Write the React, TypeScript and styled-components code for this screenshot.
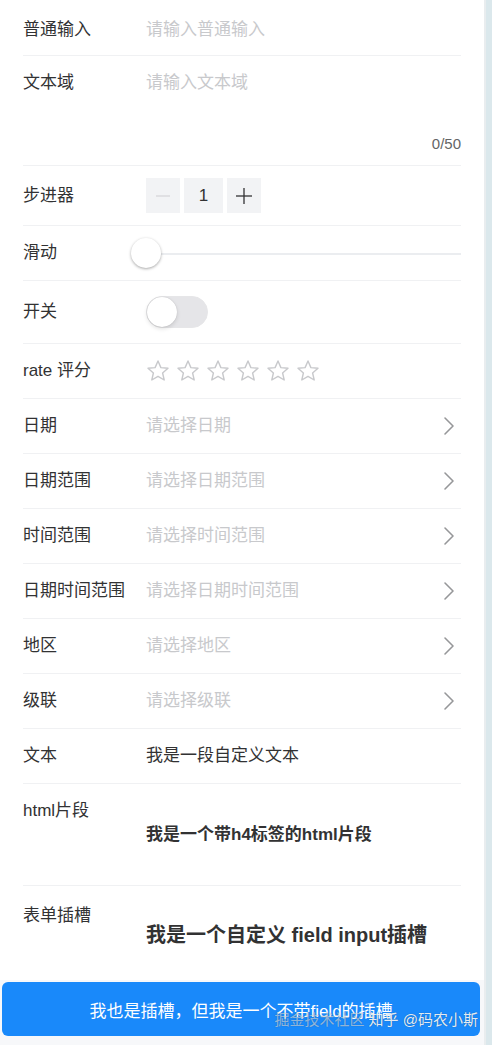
import styled, { createGlobalStyle } from 'styled-components';

const GlobalStyle = createGlobalStyle`
  html, body {
    margin: 0;
    padding: 0;
    background: #dbe8ec;
  }
  body {
    font-family: "Liberation Sans", "Noto Sans CJK SC", sans-serif;
    color: #323233;
  }
`;

const Page = styled.div`
  position: relative;
  width: 484px;
  min-height: 1045px;
  background: #f7f8fa;
  border-right: 2px solid #e9edef;
`;

const Form = styled.div`
  background: #fff;
  padding-top: 1px;
`;

const Cell = styled.div`
  padding: 0 23px;
`;

const CellInner = styled.div<{ $pad?: string; $top?: boolean; $noBorder?: boolean }>`
  display: flex;
  align-items: ${p => (p.$top ? 'flex-start' : 'center')};
  padding: ${p => p.$pad ?? '15px 0'};
  border-bottom: ${p => (p.$noBorder ? 'none' : '1px solid #f0f1f3')};
  font-size: 17px;
  line-height: 24px;
`;

const Label = styled.div`
  flex: 0 0 123px;
  color: #323233;
  white-space: nowrap;
`;

const Value = styled.div`
  flex: 1;
  min-width: 0;
  display: flex;
  align-items: center;
`;

const Placeholder = styled.span`
  flex: 1;
  color: #c8c9cc;
`;

const Text = styled.span`
  color: #323233;
`;

const TextareaBox = styled.div`
  flex: 1;
  display: flex;
  flex-direction: column;
`;

const TextareaArea = styled.div`
  height: 60px;
  color: #c8c9cc;
`;

const WordLimit = styled.div`
  margin-top: 2px;
  margin-bottom: -5px;
  text-align: right;
  font-size: 15px;
  line-height: 22px;
  color: #646566;
`;

const Stepper = styled.div`
  display: flex;
  gap: 4px;
`;

const StepBtn = styled.div<{ $disabled?: boolean }>`
  width: 34px;
  height: 35px;
  background: #f2f3f5;
  display: flex;
  align-items: center;
  justify-content: center;
  color: ${p => (p.$disabled ? '#d5d6d9' : '#323233')};
`;

const StepInput = styled.div`
  width: 39px;
  height: 35px;
  background: #f2f3f5;
  display: flex;
  align-items: center;
  justify-content: center;
  font-size: 17px;
  color: #323233;
`;

const SliderTrack = styled.div`
  position: relative;
  flex: 1;
  height: 2px;
  background: #ebedf0;
  margin-top: 2px;
`;

const SliderHandle = styled.div`
  position: absolute;
  left: -15px;
  top: -15px;
  width: 30px;
  height: 30px;
  border-radius: 50%;
  background: #fff;
  box-shadow: 0 1px 3px rgba(0, 0, 0, 0.35);
`;

const Switch = styled.div`
  position: relative;
  width: 60px;
  height: 30px;
  border: 1px solid #e6e6e8;
  border-radius: 16px;
  background: #e5e5e8;
`;

const SwitchKnob = styled.div`
  position: absolute;
  left: 0;
  top: 0;
  width: 30px;
  height: 30px;
  border-radius: 50%;
  background: #fff;
  box-shadow: 0 2px 4px rgba(0, 0, 0, 0.12), 0 0 1px rgba(0, 0, 0, 0.2);
`;

const Rate = styled.div`
  display: flex;
  gap: 6px;
`;

const ChevronBox = styled.span`
  display: flex;
  margin-right: 6px;
`;

const H4 = styled.h4`
  margin: 24px 0;
  font-size: 17px;
  line-height: 23px;
  font-weight: 700;
  color: #323233;
`;

const SlotText = styled.div`
  margin: 17px 0 13px;
  font-size: 20px;
  line-height: 28px;
  font-weight: 700;
  color: #323233;
`;

const FullButton = styled.div`
  margin: 2px 4px 0 2px;
  height: 54px;
  border-radius: 6px;
  background: #1989fa;
  color: #fff;
  font-size: 17px;
  display: flex;
  align-items: center;
  justify-content: center;
`;

const Watermark = styled.div`
  position: absolute;
  right: 6px;
  top: 1009px;
  display: flex;
  gap: 4px;
  font-size: 15px;
  line-height: 22px;
  white-space: nowrap;
`;

const MarkDim = styled.span`
  color: rgba(255, 255, 255, 0.55);
  text-shadow: 0 0 1px rgba(0, 0, 0, 0.35);
`;

const MarkBright = styled.span`
  color: rgba(255, 255, 255, 0.9);
  text-shadow: 0 0 1px rgba(0, 0, 0, 0.4);
`;

const Chevron = () => (
  <ChevronBox>
    <svg width="12" height="20" viewBox="0 0 12 20" fill="none">
      <polyline points="2,2 10,10 2,18" stroke="#969799" strokeWidth="1.6" strokeLinecap="round" strokeLinejoin="round" />
    </svg>
  </ChevronBox>
);

const Star = () => (
  <svg width="24" height="24" viewBox="0 0 24 24" fill="none">
    <polygon
      points="12,2 14.9,8.6 22,9.3 16.6,14 18.2,21 12,17.3 5.8,21 7.4,14 2,9.3 9.1,8.6"
      stroke="#c8c9cc"
      strokeWidth="1.4"
      strokeLinejoin="round"
    />
  </svg>
);

const pickers = [
  { label: '日期', ph: '请选择日期' },
  { label: '日期范围', ph: '请选择日期范围' },
  { label: '时间范围', ph: '请选择时间范围' },
  { label: '日期时间范围', ph: '请选择日期时间范围' },
  { label: '地区', ph: '请选择地区' },
  { label: '级联', ph: '请选择级联' },
];

export default function App() {
  return (
    <Page>
      <GlobalStyle />
      <Form>
        <Cell>
          <CellInner $pad="17px 0 13px">
            <Label>普通输入</Label>
            <Value>
              <Placeholder>请输入普通输入</Placeholder>
            </Value>
          </CellInner>
        </Cell>

        <Cell>
          <CellInner $top>
            <Label>文本域</Label>
            <TextareaBox>
              <TextareaArea>请输入文本域</TextareaArea>
              <WordLimit>0/50</WordLimit>
            </TextareaBox>
          </CellInner>
        </Cell>

        <Cell>
          <CellInner $pad="12px 0">
            <Label>步进器</Label>
            <Value>
              <Stepper>
                <StepBtn $disabled>
                  <svg width="16" height="16" viewBox="0 0 16 16">
                    <line x1="1" y1="8" x2="15" y2="8" stroke="currentColor" strokeWidth="1.3" />
                  </svg>
                </StepBtn>
                <StepInput>1</StepInput>
                <StepBtn>
                  <svg width="18" height="18" viewBox="0 0 18 18">
                    <line x1="1" y1="9" x2="17" y2="9" stroke="currentColor" strokeWidth="1.3" />
                    <line x1="9" y1="1" x2="9" y2="17" stroke="currentColor" strokeWidth="1.3" />
                  </svg>
                </StepBtn>
              </Stepper>
            </Value>
          </CellInner>
        </Cell>

        <Cell>
          <CellInner>
            <Label>滑动</Label>
            <Value>
              <SliderTrack>
                <SliderHandle />
              </SliderTrack>
            </Value>
          </CellInner>
        </Cell>

        <Cell>
          <CellInner>
            <Label>开关</Label>
            <Value>
              <Switch>
                <SwitchKnob />
              </Switch>
            </Value>
          </CellInner>
        </Cell>

        <Cell>
          <CellInner>
            <Label>rate 评分</Label>
            <Value>
              <Rate>
                {Array.from({ length: 6 }).map((_, i) => (
                  <Star key={i} />
                ))}
              </Rate>
            </Value>
          </CellInner>
        </Cell>

        {pickers.map(p => (
          <Cell key={p.label}>
            <CellInner>
              <Label>{p.label}</Label>
              <Value>
                <Placeholder>{p.ph}</Placeholder>
                <Chevron />
              </Value>
            </CellInner>
          </Cell>
        ))}

        <Cell>
          <CellInner>
            <Label>文本</Label>
            <Value>
              <Text>我是一段自定义文本</Text>
            </Value>
          </CellInner>
        </Cell>

        <Cell>
          <CellInner $top>
            <Label>html片段</Label>
            <Value>
              <H4>我是一个带h4标签的html片段</H4>
            </Value>
          </CellInner>
        </Cell>

        <Cell>
          <CellInner $top $pad="18px 0" $noBorder>
            <Label>表单插槽</Label>
            <Value>
              <SlotText>我是一个自定义 field input插槽</SlotText>
            </Value>
          </CellInner>
        </Cell>
      </Form>

      <FullButton>我也是插槽，但我是一个不带field的插槽</FullButton>

      <Watermark>
        <MarkDim>掘金技术社区</MarkDim>
        <MarkBright>知乎 @码农小斯</MarkBright>
      </Watermark>
    </Page>
  );
}
